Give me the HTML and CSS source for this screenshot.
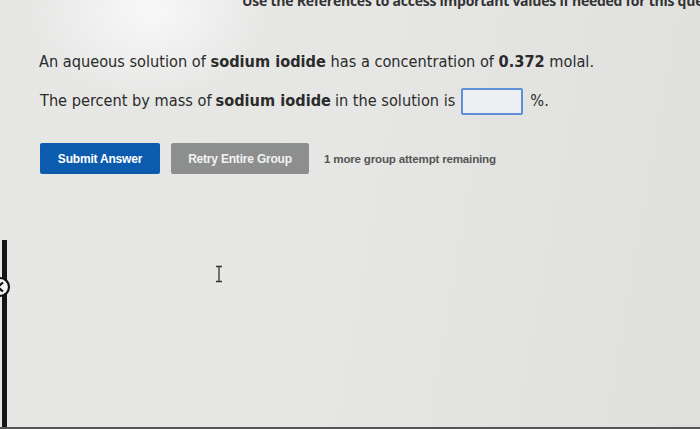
FILE: index.html
```html
<!DOCTYPE html>
<html>
<head>
<meta charset="utf-8">
<link rel="stylesheet" href="styles.css">
</head>
<body>
<div class="screen">
  <div class="refs"><span class="tick"></span>Use the References to access important values if needed for this question.</div>
  <div class="content">
    <p class="q1">An aqueous solution of <b>sodium iodide</b> has a concentration of <b>0.372</b> molal.</p>
    <p class="q2">The percent by mass of <b>sodium iodide</b> in the solution is <span class="answer"></span> <span class="pct">%.</span></p>
    <div class="actions">
      <button class="btn btn-submit">Submit Answer</button>
      <button class="btn btn-retry">Retry Entire Group</button>
      <span class="remaining">1 more group attempt remaining</span>
    </div>
  </div>
  <div class="edge"></div>
  <div class="edge-knob">
    <svg width="22" height="22" viewBox="0 0 22 22"><circle cx="11" cy="11" r="9" fill="#f4f4f4" stroke="#111" stroke-width="2.2"/><path d="M14 6.5 L8.5 11 L14 15.5" fill="none" stroke="#111" stroke-width="2.2"/></svg>
  </div>
  <div class="ibeam">
    <svg width="10" height="18" viewBox="0 0 10 18"><path d="M2 1.5 H8 M5 1.5 V16.5 M2 16.5 H8" fill="none" stroke="#333" stroke-width="1.3"/></svg>
  </div>
  <div class="bottom-line"></div>
</div>
</body>
</html>
```
FILE: styles.css
```css
html, body { margin: 0; padding: 0; }
body {
  width: 700px;
  height: 429px;
  overflow: hidden;
}
.screen {
  position: relative;
  width: 700px;
  height: 429px;
  overflow: hidden;
  background:
    radial-gradient(ellipse 120px 90px at 150px 10px, rgba(255,255,255,0.7), rgba(255,255,255,0) 100%),
    linear-gradient(100deg, #e7e8e6 0%, #e6e7e5 50%, #dfe0de 100%);
  font-family: "DejaVu Sans Condensed", "DejaVu Sans", sans-serif;
  color: #2b2b2b;
}
.refs {
  margin: -6px 0 0 216px;
  height: 13px;
  line-height: 13px;
  white-space: nowrap;
  font-family: "Open Sans", sans-serif;
  font-weight: 700;
  font-size: 14px;
  letter-spacing: -0.25px;
  color: #333;
  display: flex;
  align-items: flex-start;
}
.tick {
  display: inline-block;
  width: 1px;
  height: 9px;
  background: #555;
  margin-right: 26px;
}
.content { padding: 45px 0 0 39px; }
.q1 { margin: 0; font-size: 16.2px; line-height: 20px; }
.q2 { margin: 15px 0 0 1px; font-size: 16.2px; line-height: 28px; display: flex; align-items: center; }
.q2 b { margin: 0 4px; }
.answer {
  display: inline-block;
  width: 58px;
  height: 23px;
  border: 2px solid #5e8fd8;
  border-radius: 2px;
  background: #edf0f2;
  margin-left: 6px;
}
.pct { margin-left: 7px; }
.actions {
  display: flex;
  align-items: center;
  margin: 28px 0 0 1px;
}
.btn {
  font-family: "Liberation Sans", Arial, sans-serif;
  font-weight: 700;
  font-size: 12px;
  color: #fff;
  border: none;
  border-radius: 2px;
  height: 31px;
  padding: 0;
  letter-spacing: -0.2px;
}
.btn-submit { background: #0b5cae; width: 120px; }
.btn-retry { background: #8d8e8e; width: 138px; margin-left: 11px; color: #f3f3f3; }
.remaining {
  margin-left: 15px;
  font-family: "Liberation Sans", Arial, sans-serif;
  font-weight: 700;
  font-size: 11.6px;
  color: #555;
  letter-spacing: -0.2px;
}
.edge {
  position: absolute;
  left: 2px;
  top: 240px;
  width: 5px;
  height: 190px;
  background: #151515;
}
.edge-knob {
  position: absolute;
  left: -11px;
  top: 276px;
}
.ibeam {
  position: absolute;
  left: 214px;
  top: 265px;
}
.bottom-line {
  position: absolute;
  left: 0;
  bottom: 0;
  width: 700px;
  height: 2px;
  background: #555;
}
```
